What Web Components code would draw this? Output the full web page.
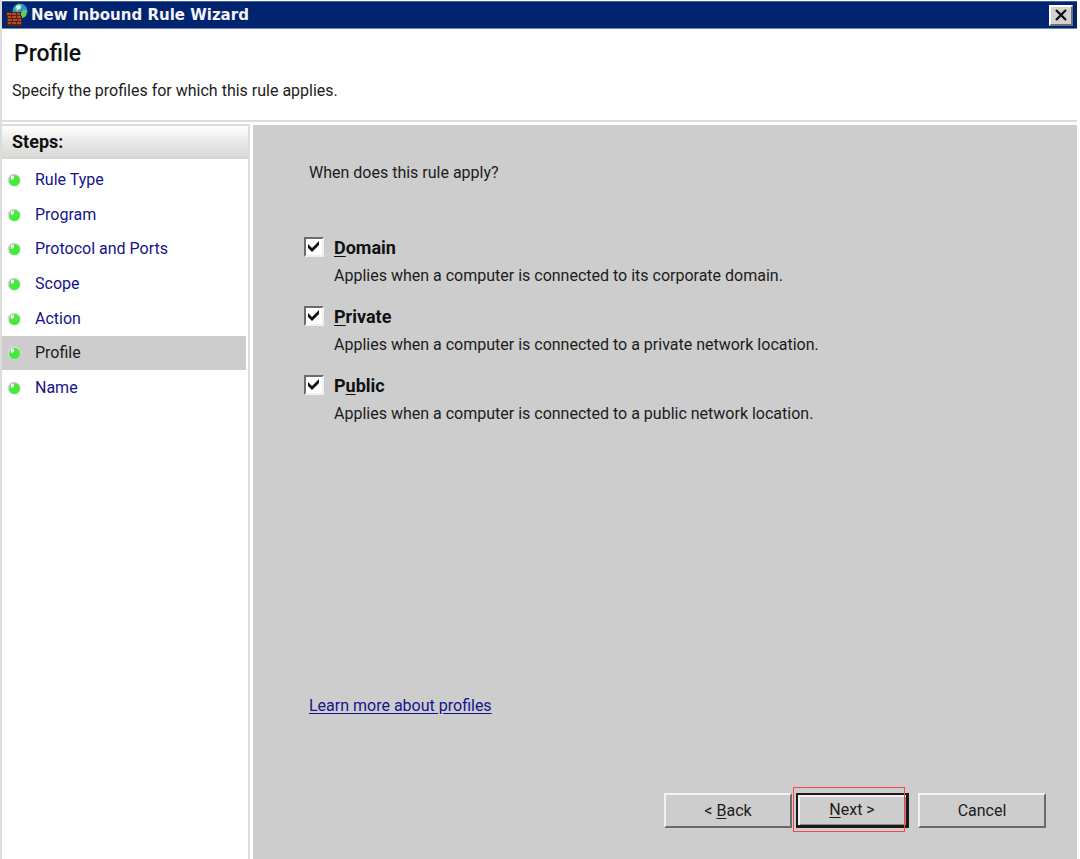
<!DOCTYPE html>
<html lang="en">
<head>
<meta charset="utf-8">
<title>New Inbound Rule Wizard</title>
<style>
html, body { margin: 0; }
body {
  --face: #cdcdcd;
  --navy: #00246f;
  --link: #14148c;
  --line: #dcdcdc;
  font: 16px/20px Roboto, "Liberation Sans", sans-serif;
  color: #1c1c1c;
  background: #fff;
}
</style>
</head>
<body>
<rule-wizard></rule-wizard>

<template id="t-wizard">
  <style>
    :host { display: flex; flex-direction: column; min-height: 100vh; box-sizing: border-box; padding: 1px 3px 0 0; border-left: 2px solid var(--line); }
    .body { flex: 1; display: flex; gap: 3px; padding-top: 2px; }
    wizard-steps { flex: 0 0 248px; }
    wizard-page { flex: 1; }
  </style>
  <title-bar>New Inbound Rule Wizard</title-bar>
  <page-heading heading="Profile">Specify the profiles for which this rule applies.</page-heading>
  <div class="body">
    <wizard-steps>
      <wizard-step>Rule Type</wizard-step>
      <wizard-step>Program</wizard-step>
      <wizard-step>Protocol and Ports</wizard-step>
      <wizard-step>Scope</wizard-step>
      <wizard-step>Action</wizard-step>
      <wizard-step current>Profile</wizard-step>
      <wizard-step>Name</wizard-step>
    </wizard-steps>
    <wizard-page>
      <profile-option><span><u>D</u>omain</span><span slot="description">Applies when a computer is connected to its corporate domain.</span></profile-option>
      <profile-option><span><u>P</u>rivate</span><span slot="description">Applies when a computer is connected to a private network location.</span></profile-option>
      <profile-option><span>P<u>u</u>blic</span><span slot="description">Applies when a computer is connected to a public network location.</span></profile-option>
      <push-button slot="actions">&lt; <u>B</u>ack</push-button>
      <push-button slot="actions" primary><u>N</u>ext &gt;</push-button>
      <push-button slot="actions">Cancel</push-button>
    </wizard-page>
  </div>
</template>

<template id="t-title">
  <style>
    :host { display: flex; align-items: center; gap: 3px; height: 26px; padding: 0 4px; background: var(--navy); border-bottom: 1px solid #7686b4; border-top: 1px solid #45609c; box-sizing: content-box; color: #f4f4fa; }
    .icon { flex: none; }
    .text { flex: 1; font: bold 15px/24px "DejaVu Sans", sans-serif; }
    button { flex: none; width: 24px; height: 21px; padding: 0; display: grid; place-items: center; background: #d2d2d2; border: 2px solid; border-color: #fff #70706c #70706c #fff; }
  </style>
  <svg class="icon" width="22" height="24" viewBox="0 0 22 24" aria-hidden="true">
    <circle cx="14" cy="8" r="7.500" fill="#2f8ee0"/>
    <path d="M8 5l4-4 4 1-1 4-4 3zM17 7l4 0-1 6-4 2-1-4z" fill="#5dd05a"/>
    <path d="M10 3l4-1 1 3-4 2z" fill="#d9f5ff"/>
    <path d="M0 9h15v4h1v10H1v-9H0z" fill="#5e2012"/>
    <path d="M1 10h4v2H1zM6 10h4v2H6zM11 10h3v2h-3zM2 13h3v2H2zM6 13h4v2H6zM11 13h4v2h-4zM2 16h4v2H2zM7 16h4v2H7zM12 16h3v2h-3zM2 19h3v2H2zM6 19h4v2H6zM11 19h4v2h-4z" fill="#a84c2c"/>
  </svg>
  <span class="text"><slot></slot></span>
  <button type="button" aria-label="Close">
    <svg width="14" height="12" viewBox="0 0 14 12" aria-hidden="true"><path d="M2 1l10 10M12 1L2 11" stroke="#111" stroke-width="2.400"/></svg>
  </button>
</template>

<template id="t-heading">
  <style>
    :host { display: block; padding: 13px 10px 19px; border-bottom: 2px solid var(--line); background: #fff; }
    h1 { margin: 0 2px 15px; font: 500 23px/24px Roboto, "Liberation Sans", sans-serif; color: #111; }
    p { margin: 0; }
  </style>
  <h1></h1>
  <p><slot></slot></p>
</template>

<template id="t-steps">
  <style>
    :host { display: block; box-sizing: border-box; border: solid var(--line); border-width: 2px 2px 0 0; background: #fff; }
    h2 { margin: 0; padding: 6px 10px 7px; font: bold 18px/20px Roboto, "Liberation Sans", sans-serif; color: #111; background: linear-gradient(#fefefb, #e8e8e8 50%, #d6d6d4); }
    nav { display: grid; grid-auto-rows: 1fr; height: 242px; padding: 4px 2px 0 0; }
  </style>
  <h2>Steps:</h2>
  <nav aria-label="Steps"><slot></slot></nav>
</template>

<template id="t-step">
  <style>
    :host { display: flex; }
    a { flex: 1; display: flex; align-items: center; gap: 14px; padding-left: 5px; color: var(--link); text-decoration: none; }
    :host([current]) a { background: var(--face); color: #1c1c1c; }
  </style>
  <a href="#">
    <svg width="14" height="14" viewBox="0 0 14 14" aria-hidden="true">
      <circle cx="7" cy="7" r="6.500" fill="#dcdcdc"/>
      <circle cx="7.500" cy="7.500" r="5.500" fill="#43ec38"/>
      <path d="M2 7a5 5 0 0 1 5-5l-1 4z" fill="#b9b9b9"/>
      <path d="M4 3l3 0 0 3-3 1z" fill="#e9f6e9"/>
    </svg>
    <span><slot></slot></span>
  </a>
</template>

<template id="t-page">
  <style>
    :host { display: flex; flex-direction: column; box-sizing: border-box; padding: 38px 31px 31px 51px; margin-top: 1px; background: var(--face); }
    .question { margin: 0 5px 54px; }
    .options { display: grid; gap: 20px; }
    .more { margin: auto 5px 77px; }
    .more a { color: var(--link); text-underline-offset: 2px; }
    .actions { display: flex; justify-content: flex-end; }
  </style>
  <p class="question">When does this rule apply?</p>
  <div class="options"><slot></slot></div>
  <p class="more"><a href="#">Learn more about profiles</a></p>
  <div class="actions"><slot name="actions"></slot></div>
</template>

<template id="t-option">
  <style>
    :host { display: grid; grid-template-columns: 20px 1fr; column-gap: 10px; row-gap: 8px; }
    input { appearance: none; box-sizing: border-box; width: 20px; height: 20px; margin: 0; border: 2px solid; border-color: #6c6c6c #f0f0f0 #f0f0f0 #6c6c6c; background: #fff; }
    input:checked { background: #fff url("data:image/svg+xml,%3Csvg xmlns='http://www.w3.org/2000/svg' viewBox='0 0 16 16'%3E%3Cpath d='M2 5l4 4 7-7v4l-7 7-4-4z' fill='%23111'/%3E%3C/svg%3E") center / 16px 16px no-repeat; }
    label { font-size: 18px; font-weight: bold; color: #111; padding-top: 1px; }
    p { grid-column: 2; margin: 0; }
    ::slotted(span) { text-underline-offset: 2px; }
  </style>
  <input type="checkbox" id="box" checked aria-describedby="about">
  <label for="box"><slot></slot></label>
  <p id="about"><slot name="description"></slot></p>
</template>

<template id="t-button">
  <style>
    :host { display: block; margin-left: 9px; }
    :host([primary]) { position: relative; margin-left: 4px; }
    button { box-sizing: border-box; width: 128px; height: 35px; padding: 0; border: 2px solid; border-color: #f2f2f2 #6a6a6a #6a6a6a #f2f2f2; background: var(--face); color: inherit; font: inherit; text-underline-offset: 2px; }
    :host([primary]) button { width: 113px; border-color: #1a1a1a; border-width: 2px 3px 3px 2px; box-shadow: inset 2px 2px #f2f2f2, inset -1px -1px #8a8a8a; }
    :host([primary])::after { content: ""; position: absolute; inset: -6px 4px -4px -3px; border: 1px solid #ff4444; pointer-events: none; }
  </style>
  <button type="button"><slot></slot></button>
</template>

<script>
class TemplateElement extends HTMLElement {
  constructor() {
    super();
    const template = document.getElementById(this.constructor.template);
    this.attachShadow({ mode: "open" }).append(template.content.cloneNode(true));
  }
}
class TitleBar extends TemplateElement { static template = "t-title"; }
class PageHeading extends TemplateElement {
  static template = "t-heading";
  connectedCallback() {
    this.shadowRoot.querySelector("h1").textContent = this.getAttribute("heading");
  }
}
class WizardSteps extends TemplateElement { static template = "t-steps"; }
class WizardStep extends TemplateElement {
  static template = "t-step";
  connectedCallback() {
    if (this.hasAttribute("current")) {
      this.shadowRoot.querySelector("a").setAttribute("aria-current", "step");
    }
  }
}
class WizardPage extends TemplateElement { static template = "t-page"; }
class ProfileOption extends TemplateElement { static template = "t-option"; }
class PushButton extends TemplateElement { static template = "t-button"; }
class RuleWizard extends TemplateElement { static template = "t-wizard"; }

customElements.define("title-bar", TitleBar);
customElements.define("page-heading", PageHeading);
customElements.define("wizard-steps", WizardSteps);
customElements.define("wizard-step", WizardStep);
customElements.define("wizard-page", WizardPage);
customElements.define("profile-option", ProfileOption);
customElements.define("push-button", PushButton);
customElements.define("rule-wizard", RuleWizard);
</script>
</body>
</html>
